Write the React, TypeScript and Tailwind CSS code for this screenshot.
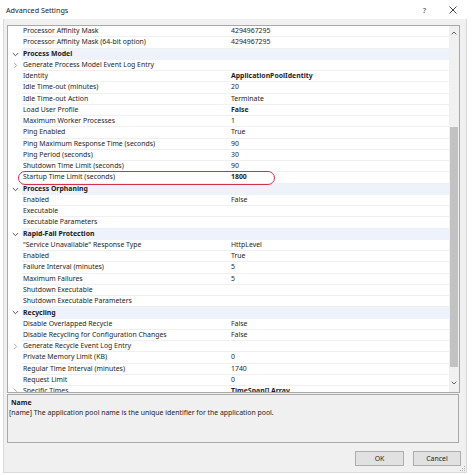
import React from "react";

type Row =
  | { kind: "cat"; name: string }
  | { kind: "item"; name: string; value?: string; bold?: boolean; sub?: boolean };

const rows: Row[] = [
  { kind: "item", name: "Processor Affinity Mask", value: "4294967295" },
  { kind: "item", name: "Processor Affinity Mask (64-bit option)", value: "4294967295" },
  { kind: "cat", name: "Process Model" },
  { kind: "item", name: "Generate Process Model Event Log Entry", sub: true },
  { kind: "item", name: "Identity", value: "ApplicationPoolIdentity", bold: true },
  { kind: "item", name: "Idle Time-out (minutes)", value: "20" },
  { kind: "item", name: "Idle Time-out Action", value: "Terminate" },
  { kind: "item", name: "Load User Profile", value: "False", bold: true },
  { kind: "item", name: "Maximum Worker Processes", value: "1" },
  { kind: "item", name: "Ping Enabled", value: "True" },
  { kind: "item", name: "Ping Maximum Response Time (seconds)", value: "90" },
  { kind: "item", name: "Ping Period (seconds)", value: "30" },
  { kind: "item", name: "Shutdown Time Limit (seconds)", value: "90" },
  { kind: "item", name: "Startup Time Limit (seconds)", value: "1800", bold: true },
  { kind: "cat", name: "Process Orphaning" },
  { kind: "item", name: "Enabled", value: "False" },
  { kind: "item", name: "Executable" },
  { kind: "item", name: "Executable Parameters" },
  { kind: "cat", name: "Rapid-Fail Protection" },
  { kind: "item", name: "\"Service Unavailable\" Response Type", value: "HttpLevel" },
  { kind: "item", name: "Enabled", value: "True" },
  { kind: "item", name: "Failure Interval (minutes)", value: "5" },
  { kind: "item", name: "Maximum Failures", value: "5" },
  { kind: "item", name: "Shutdown Executable" },
  { kind: "item", name: "Shutdown Executable Parameters" },
  { kind: "cat", name: "Recycling" },
  { kind: "item", name: "Disable Overlapped Recycle", value: "False" },
  { kind: "item", name: "Disable Recycling for Configuration Changes", value: "False" },
  { kind: "item", name: "Generate Recycle Event Log Entry", sub: true },
  { kind: "item", name: "Private Memory Limit (KB)", value: "0" },
  { kind: "item", name: "Regular Time Interval (minutes)", value: "1740" },
  { kind: "item", name: "Request Limit", value: "0" },
  { kind: "item", name: "Specific Times", value: "TimeSpan[] Array", bold: true, sub: true },
];

const ChevronDown = () => (
  <svg width="7" height="5" viewBox="0 0 7 5">
    <path d="M0.8 1 L3.5 3.7 L6.2 1" fill="none" stroke="#555" strokeWidth="1" />
  </svg>
);

const ChevronRight = () => (
  <svg width="5" height="7" viewBox="0 0 5 7">
    <path d="M1 0.8 L3.7 3.5 L1 6.2" fill="none" stroke="#a8a8a8" strokeWidth="1" />
  </svg>
);

const GridRow = ({ row }: { row: Row }) => {
  if (row.kind === "cat") {
    return (
      <div className="flex h-[11.25px] shrink-0 items-center">
        <div className="flex w-[14px] shrink-0 items-center justify-center">
          <ChevronDown />
        </div>
        <div className="flex h-full flex-1 items-center whitespace-nowrap bg-[#eef3fb] pl-[1px] font-bold text-[#1a1a1a]">
          {row.name}
        </div>
      </div>
    );
  }
  return (
    <div className="flex h-[11.25px] shrink-0 items-center">
      <div className="flex w-[14px] shrink-0 items-center justify-center">
        {row.sub && <ChevronRight />}
      </div>
      <div className="flex h-full flex-1 items-center border-b border-[#f0f0f0]">
        <div className="w-[207px] shrink-0 whitespace-nowrap pl-[1px] text-[#1e1e1e]">{row.name}</div>
        <div className={`whitespace-nowrap pl-[2px] text-[#1e1e1e] ${row.bold ? "font-bold" : ""}`}>
          {row.value}
        </div>
      </div>
    </div>
  );
};

export default function App() {
  return (
    <div className="relative h-[475px] w-[474px] overflow-hidden bg-white font-['Noto_Sans',sans-serif] text-[6.9px] leading-[10px] text-[#1e1e1e]">
      {/* title bar */}
      <div className="flex h-[19px] items-center pl-[6px]">
        <span className="flex-1 text-[7.2px] text-[#222]">Advanced Settings</span>
        <span className="mr-[23px] text-[7.5px] text-[#333]">?</span>
        <svg width="8" height="8" viewBox="0 0 8 8" className="mr-[17px]">
          <path d="M0.5 0.5 L7.5 7.5 M7.5 0.5 L0.5 7.5" stroke="#333" strokeWidth="0.9" />
        </svg>
      </div>

      {/* body */}
      <div className="ml-[3px] flex h-[454px] w-[464px] flex-col border-x border-b border-[#dadada] bg-[#f0f0f0] pl-[3px] pt-[6px]">
        {/* property grid */}
        <div className="relative flex h-[368px] w-[453px] border border-[#a8a8a8] bg-white">
          <div className="flex flex-1 flex-col overflow-hidden">
            {rows.map((r, i) => (
              <GridRow key={i} row={r} />
            ))}
          </div>
          {/* scrollbar */}
          <div className="relative flex w-[10px] shrink-0 flex-col items-center bg-[#f0f0f0]">
            <div className="flex h-[11px] items-center justify-center pt-[3px]">
              <svg width="6" height="4" viewBox="0 0 6 4">
                <path d="M0.7 3.3 L3 1 L5.3 3.3" fill="none" stroke="#606060" strokeWidth="1" />
              </svg>
            </div>
            <div className="mt-[90px] h-[240px] w-[8px] bg-[#c2c2c2]" />
            <div className="flex-1" />
            <div className="flex h-[14px] items-start justify-center pt-[3px]">
              <svg width="6" height="4" viewBox="0 0 6 4">
                <path d="M0.7 0.7 L3 3 L5.3 0.7" fill="none" stroke="#606060" strokeWidth="1" />
              </svg>
            </div>
          </div>
          {/* highlight */}
          <div className="pointer-events-none absolute left-[10px] top-[145px] h-[14px] w-[257px] rounded-[7px] border-[1.5px] border-[#d4304d]" />
        </div>

        {/* description */}
        <div className="mt-[1px] h-[51px] w-[452px] border border-[#a8a8a8] bg-[#f0f0f0] px-[1px] pt-[3px]">
          <div className="pl-[2px] font-bold text-[#1a1a1a]">Name</div>
          <div className="text-[#1e1e1e]">
            [name] The application pool name is the unique identifier for the application pool.
          </div>
        </div>

        {/* buttons */}
        <div className="mt-[8px] flex justify-end gap-[9px] pr-[5px]">
          <button className="h-[15px] w-[49px] border border-[#adadad] bg-[#e1e1e1] text-[6.9px] text-[#1e1e1e]">
            OK
          </button>
          <button className="h-[15px] w-[48px] border border-[#adadad] bg-[#e1e1e1] text-[6.9px] text-[#1e1e1e]">
            Cancel
          </button>
        </div>
        <div className="flex flex-1 items-end justify-end pb-[1px] pr-[1px]">
          <svg width="5" height="5" viewBox="0 0 5 5">
            <rect x="4" y="0" width="1" height="1" fill="#b0b0b0" />
            <rect x="2" y="2" width="1" height="1" fill="#b0b0b0" />
            <rect x="4" y="2" width="1" height="1" fill="#b0b0b0" />
            <rect x="0" y="4" width="1" height="1" fill="#b0b0b0" />
            <rect x="2" y="4" width="1" height="1" fill="#b0b0b0" />
            <rect x="4" y="4" width="1" height="1" fill="#b0b0b0" />
          </svg>
        </div>
      </div>
    </div>
  );
}
